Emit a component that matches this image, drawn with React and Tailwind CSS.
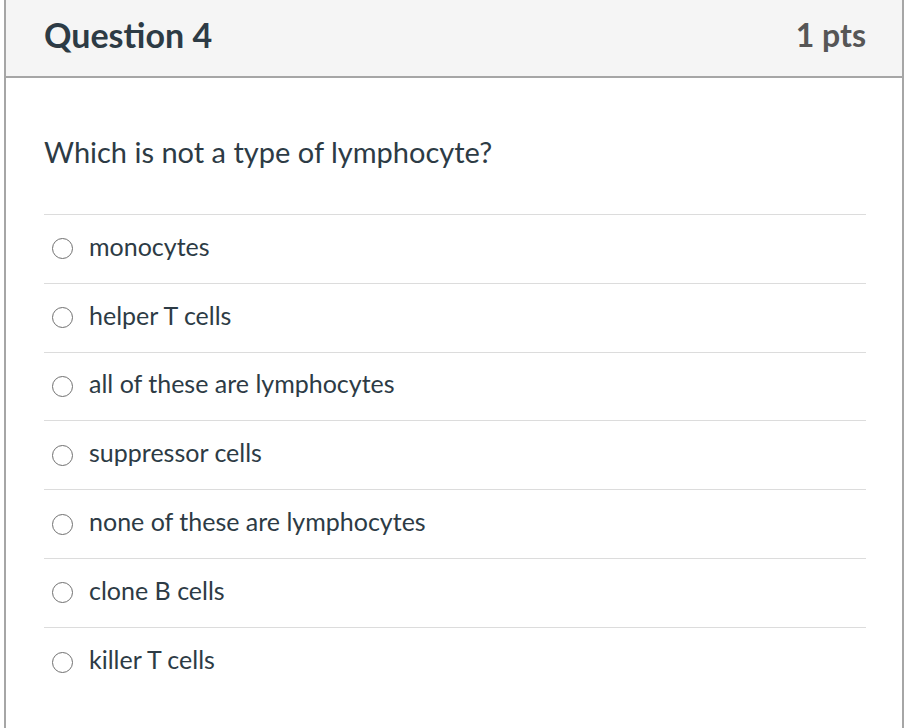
import React from "react";

const options = [
  "monocytes",
  "helper T cells",
  "all of these are lymphocytes",
  "suppressor cells",
  "none of these are lymphocytes",
  "clone B cells",
  "killer T cells",
];

export default function App() {
  return (
    <div className="w-[908px] h-[728px] bg-white overflow-hidden" style={{ fontFamily: "Lato, 'Noto Sans', sans-serif" }}>
      <div className="ml-[4px] w-[900px] h-[740px] border-x-2 border-[#a6a6a6]">
        <div className="h-[78px] bg-[#f5f5f5] border-b-2 border-[#a6a6a6] flex items-center justify-between pl-[38px] pr-[36px] pb-[6px]">
          <h2 className="text-[34px] font-bold text-[#2d3b45] leading-none">Question 4</h2>
          <div className="text-[32px] font-bold text-[#565656] leading-none">1 pts</div>
        </div>
        <div className="pl-[38px] pr-[36px]">
          <div className="pt-[56px] pb-[44px] text-[29px] text-[#2d3b45] leading-[36px]">
            Which is not a type of lymphocyte?
          </div>
          <div className="border-t border-[#dcdcdc]">
            {options.map((o, i) => (
              <div
                key={o}
                className={`h-[68.8px] flex items-center pl-[8px] gap-[16px] ${i < options.length - 1 ? "border-b border-[#dcdcdc]" : ""}`}
              >
                <span className="w-[21px] h-[21px] rounded-full border-[1.5px] border-[#707070] bg-white shrink-0" />
                <span className="text-[25px] text-[#2d3b45] leading-none pb-[5px]">{o}</span>
              </div>
            ))}
          </div>
        </div>
      </div>
    </div>
  );
}
